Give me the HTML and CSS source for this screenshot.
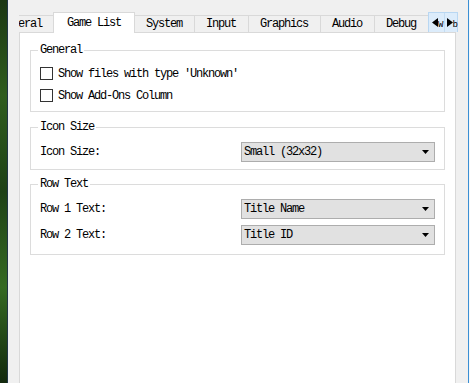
FILE: index.html
```html
<!DOCTYPE html>
<html lang="en">
<head>
  <meta charset="UTF-8">
  <title>Settings - Game List</title>
  <link rel="stylesheet" href="styles.css">
</head>
<body>
  <div class="screen">
    <div class="desktop"></div>
    <div class="window">
      <div class="tabbar">
        <div class="tab tab-cut"><span>General</span></div>
        <div class="tab tab-active">Game List</div>
        <div class="tab">System</div>
        <div class="tab">Input</div>
        <div class="tab">Graphics</div>
        <div class="tab">Audio</div>
        <div class="tab">Debug</div>
        <div class="tab-scroll">
          <div class="scroll-btn">
            <svg width="6" height="9" viewBox="0 0 6 9"><polygon points="6,0 6,9 0,4.5" fill="#000"/></svg>
            <span class="peek">W</span>
          </div>
          <div class="scroll-btn">
            <svg width="6" height="9" viewBox="0 0 6 9"><polygon points="0,0 0,9 6,4.5" fill="#000"/></svg>
            <span class="peek">b</span>
          </div>
        </div>
      </div>

      <div class="pane">
        <fieldset class="group group-general">
          <legend>General</legend>
          <label class="check"><span class="box"></span>Show files with type 'Unknown'</label>
          <label class="check"><span class="box"></span>Show Add-Ons Column</label>
        </fieldset>

        <fieldset class="group group-icon">
          <legend>Icon Size</legend>
          <div class="field">
            <span>Icon Size:</span>
            <div class="combo">Small (32x32)<svg width="7" height="4" viewBox="0 0 7 4"><polygon points="0,0 7,0 3.5,4" fill="#000"/></svg></div>
          </div>
        </fieldset>

        <fieldset class="group group-rows">
          <legend>Row Text</legend>
          <div class="field">
            <span>Row 1 Text:</span>
            <div class="combo">Title Name<svg width="7" height="4" viewBox="0 0 7 4"><polygon points="0,0 7,0 3.5,4" fill="#000"/></svg></div>
          </div>
          <div class="field">
            <span>Row 2 Text:</span>
            <div class="combo">Title ID<svg width="7" height="4" viewBox="0 0 7 4"><polygon points="0,0 7,0 3.5,4" fill="#000"/></svg></div>
          </div>
        </fieldset>
      </div>
    </div>
  </div>
</body>
</html>
```

FILE: styles.css
```css
:root {
  --window-bg: #f0f0f0;
  --line: #d9d9d9;
  --group-line: #dcdcdc;
  --combo-bg: #e1e1e1;
  --combo-border: #adadad;
}

* {
  box-sizing: border-box;
}

body {
  margin: 0;
  background: #f4f8fb;
  font-family: 'Liberation Mono', 'Courier New', monospace;
  font-size: 12px;
  letter-spacing: -1.2px;
  color: #000;
  overflow: hidden;
}

.screen {
  display: flex;
  height: 383px;
}

/* bit of the desktop wallpaper on the left */
.desktop {
  width: 7px;
  flex: none;
  background: linear-gradient(180deg, #1b3713 0%, #2f5d1d 25%, #1e4116 50%, #356a22 75%, #12290d 100%);
}

.window {
  width: 462px;
  flex: none;
  display: flex;
  flex-direction: column;
  background: var(--window-bg);
  border-left: 1px solid #203646;
  border-right: 1px solid #3a8fd4;
  padding: 0 12px 0 11px;
}

/* Tabs */
.tabbar {
  display: flex;
  align-items: flex-end;
  height: 32px;
}

.tab {
  flex: none;
  height: 17px;
  line-height: 15px;
  padding: 1px 12px 0 11px;
  margin-left: -1px;
  border: 1px solid var(--line);
  border-bottom: none;
  background: var(--window-bg);
  white-space: nowrap;
}

.tab-cut {
  width: 35px;
  margin-left: 0;
  border-left: none;
  padding: 1px 11px 0 0;
  display: flex;
  justify-content: flex-end;
  overflow: hidden;
}

.tab-active {
  position: relative;
  z-index: 1;
  height: 21px;
  line-height: 18px;
  margin-bottom: -1px;
  padding: 1px 13px 0;
  background: #fff;
}

.tab-scroll {
  flex: none;
  display: flex;
  width: 30px;
  height: 20px;
  margin-left: -1px;
  border: 1px solid #b9d7f2;
  border-bottom: none;
  background: #dcecfb;
}

.scroll-btn {
  flex: 1;
  display: flex;
  align-items: center;
  padding-left: 3px;
}

.scroll-btn + .scroll-btn {
  border-left: 1px solid #c4ddf3;
  padding-left: 2px;
}

.peek {
  font-size: 9px;
  letter-spacing: 0;
  line-height: 9px;
  margin-top: 5px;
}

/* Page */
.pane {
  flex: 1;
  background: #fff;
  border: 1px solid var(--line);
  border-bottom: none;
  padding: 0 10px;
}

.group {
  margin: 0;
  min-width: 0;
  border: 1px solid var(--group-line);
  display: flex;
  flex-direction: column;
}

.group legend {
  padding: 0 2px;
  margin-left: -2px;
  line-height: 12px;
}

.group-general {
  margin-top: 11px;
  padding: 11px 9px 9px;
  gap: 9px;
}

.group-icon {
  margin-top: 9px;
  padding: 9px 9px 7px;
}

.group-rows {
  margin-top: 8px;
  padding: 9px 9px 9px;
  gap: 6px;
}

.check {
  display: flex;
  align-items: center;
  height: 13px;
  white-space: nowrap;
}

.box {
  width: 13px;
  height: 13px;
  margin-right: 5px;
  border: 1px solid #333;
  background: #fff;
}

.field {
  display: flex;
  align-items: center;
  justify-content: space-between;
  height: 20px;
}

.combo {
  width: 194px;
  height: 20px;
  display: flex;
  align-items: center;
  justify-content: space-between;
  padding: 0 5px 0 2px;
  border: 1px solid var(--combo-border);
  background: var(--combo-bg);
}
```
